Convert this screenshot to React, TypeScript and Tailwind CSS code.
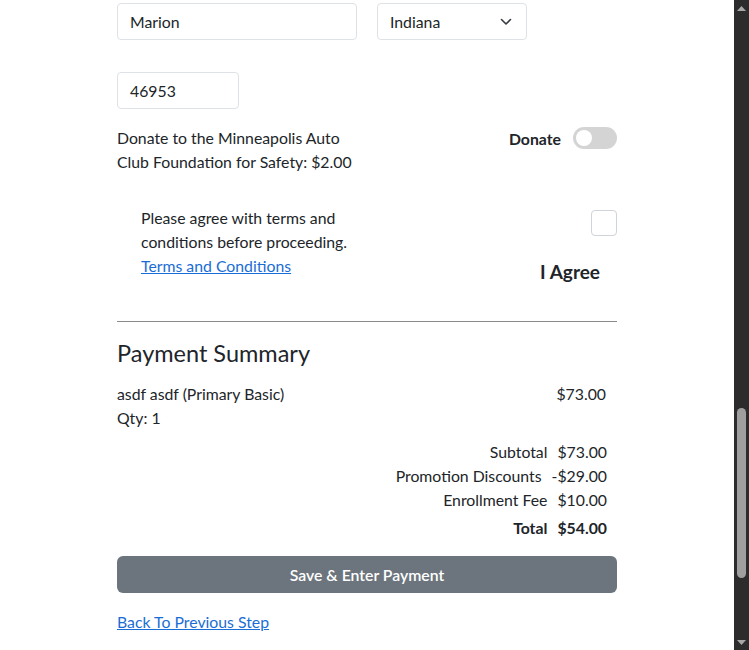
import React from "react";

const font = { fontFamily: "Lato, 'Open Sans', sans-serif" };

function ScrollBar() {
  return (
    <div className="flex h-[650px] w-[15px] shrink-0 flex-col items-center bg-[#2c2c2c]">
      <div className="flex h-[15px] w-full items-center justify-center">
        <svg width="9" height="6" viewBox="0 0 9 6"><path d="M0 6 L4.5 1 L9 6 Z" fill="#a8a8a8" /></svg>
      </div>
      <div className="h-[393px]" />
      <div className="h-[170px] w-[9px] rounded-[5px] bg-[#9f9f9f]" />
      <div className="flex-1" />
      <div className="flex h-[15px] w-full items-center justify-center">
        <svg width="9" height="6" viewBox="0 0 9 6"><path d="M0 0 L4.5 5 L9 0 Z" fill="#a8a8a8" /></svg>
      </div>
    </div>
  );
}

export default function App() {
  return (
    <div className="flex h-[650px] w-[749px] overflow-hidden bg-white text-[#212529]" style={font}>
      <div className="flex flex-1 justify-center">
        <div className="w-[500px] pt-[3px] text-[15.8px] leading-[24px]">
          <div className="flex gap-[20px]">
            <div className="flex h-[37px] w-[240px] items-center rounded-[4px] border border-[#dee2e6] px-[12px]">Marion</div>
            <div className="flex h-[37px] w-[150px] items-center justify-between rounded-[4px] border border-[#dee2e6] pl-[12px] pr-[14px]">
              <span>Indiana</span>
              <svg width="12" height="8" viewBox="0 0 12 8" fill="none"><path d="M1.5 1.5 L6 6 L10.5 1.5" stroke="#343a40" strokeWidth="1.6" strokeLinecap="round" strokeLinejoin="round" /></svg>
            </div>
          </div>
          <div className="mt-[32px] flex h-[37px] w-[122px] items-center rounded-[4px] border border-[#dee2e6] px-[12px]">46953</div>

          <div className="mt-[17px] flex justify-between">
            <div className="w-[250px]">Donate to the Minneapolis Auto Club Foundation for Safety: $2.00</div>
            <div className="flex h-[24px] items-start gap-[12px] pt-[1px]">
              <span className="font-bold">Donate</span>
              <div className="flex h-[22px] w-[44px] items-center rounded-full bg-[#d4d4d4] pl-[3px]">
                <div className="h-[16px] w-[16px] rounded-full bg-white" />
              </div>
            </div>
          </div>

          <div className="mt-[32px] flex justify-between pl-[24px]">
            <div className="w-[240px]">
              <div>Please agree with terms and conditions before proceeding.</div>
              <a href="#" className="text-[#1a6dd5] underline">Terms and Conditions</a>
            </div>
            <div className="flex flex-col items-end">
              <div className="mt-[4px] h-[26px] w-[26px] rounded-[4px] border border-[#ced4da]" />
              <div className="mr-[17px] mt-[24px] text-[19px] font-bold">I Agree</div>
            </div>
          </div>

          <div className="mt-[37px] border-t border-[#8a8a8a]" />

          <div className="mt-[17px] text-[23.5px] leading-[28px]">Payment Summary</div>

          <div className="mt-[15px] flex justify-between pr-[11px]">
            <div>
              <div>asdf asdf (Primary Basic)</div>
              <div>Qty: 1</div>
            </div>
            <div>$73.00</div>
          </div>

          <div className="mt-[10px] flex flex-col items-end pr-[10px]">
            <div className="flex gap-[10px]"><span>Subtotal</span><span>$73.00</span></div>
            <div className="flex gap-[10px]"><span>Promotion Discounts</span><span>-$29.00</span></div>
            <div className="flex gap-[10px]"><span>Enrollment Fee</span><span>$10.00</span></div>
            <div className="mt-[4px] flex gap-[10px] font-bold"><span>Total</span><span>$54.00</span></div>
          </div>

          <button className="mt-[16px] flex h-[37px] w-full items-center justify-center rounded-[6px] bg-[#6c757d] font-semibold text-white">
            Save &amp; Enter Payment
          </button>

          <div className="mt-[17px]">
            <a href="#" className="text-[#1a6dd5] underline">Back To Previous Step</a>
          </div>
        </div>
      </div>
      <ScrollBar />
    </div>
  );
}
